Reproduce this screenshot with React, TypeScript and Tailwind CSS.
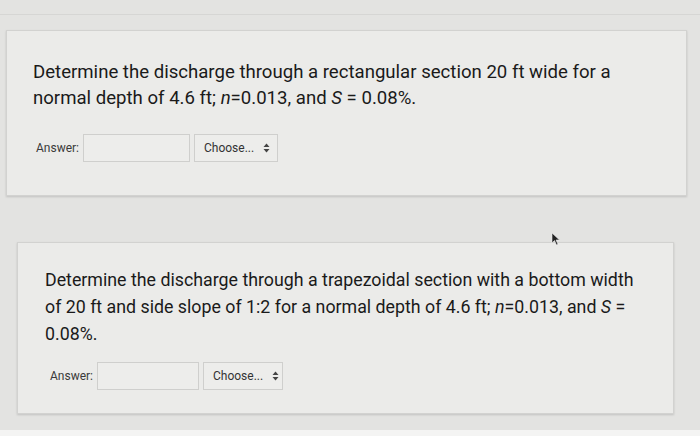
import React from "react";

type RowProps = {
  className: string;
  inputClass: string;
  selectClass: string;
};

type QuestionProps = RowProps & {
  children: React.ReactNode;
  cardClass: string;
  textClass: string;
  rowClass: string;
};

const Arrows = () => (
  <svg width="7" height="10" viewBox="0 0 7 10" className="ml-[9px]">
    <path d="M3.5 0.5 L6.5 4 L0.5 4 Z" fill="#444" />
    <path d="M3.5 9.5 L6.5 6 L0.5 6 Z" fill="#444" />
  </svg>
);

const AnswerRow = ({ className, inputClass, selectClass }: RowProps) => (
  <div className={`flex items-center ${className}`}>
    <span className="text-[12px] text-[#3a3a3a] mr-[4px]">Answer:</span>
    <div className={`h-[28px] border border-[#cfcfcd] bg-[#ededeb] ${inputClass}`} />
    <div className={`ml-[4px] h-[28px] border border-[#cfcfcd] bg-[#ededeb] flex items-center pl-[9px] ${selectClass}`}>
      <span className="text-[12px] text-[#333]">Choose...</span>
      <Arrows />
    </div>
  </div>
);

const Question = ({ children, cardClass, textClass, rowClass, inputClass, selectClass }: QuestionProps) => (
  <div className={`border border-[#d2d2d0] bg-[#ebebe9] shadow-[0_1px_2px_rgba(0,0,0,0.15)] ${cardClass}`}>
    <p className={`text-[#1a1a1a] whitespace-nowrap ${textClass}`}>{children}</p>
    <AnswerRow className={rowClass} inputClass={inputClass} selectClass={selectClass} />
  </div>
);

export default function App() {
  return (
    <div
      className="relative w-[700px] h-[436px] overflow-hidden bg-[#e3e3e1] flex flex-col"
      style={{ fontFamily: "Roboto, 'Liberation Sans', sans-serif" }}
    >
      <div className="mt-[14px] h-px bg-[#d6d6d4]" />
      <Question
        cardClass="mt-[15px] ml-[6px] w-[681px] h-[166px] pt-[28px] pl-[26px]"
        textClass="text-[18.6px] leading-[26px]"
        rowClass="mt-[23px] pl-[3px]"
        inputClass="w-[107px]"
        selectClass="w-[84px]"
      >
        Determine the discharge through a rectangular section 20 ft wide for a
        <br />
        normal depth of 4.6 ft; <i>n</i>=0.013, and <i>S</i> = 0.08%.
      </Question>
      <Question
        cardClass="mt-[46px] ml-[17px] w-[657px] h-[172px] pt-[23px] pl-[27px]"
        textClass="text-[17.8px] leading-[27px]"
        rowClass="mt-[15px] pl-[5px]"
        inputClass="w-[102px]"
        selectClass="w-[80px]"
      >
        Determine the discharge through a trapezoidal section with a bottom width
        <br />
        of 20 ft and side slope of 1:2 for a normal depth of 4.6 ft; <i>n</i>=0.013, and <i>S</i> =
        <br />
        0.08%.
      </Question>
      <div className="mt-auto h-[6px] bg-[#f4f4f3]" />
      <svg className="absolute left-[551px] top-[232px]" width="10" height="14" viewBox="0 0 10 14">
        <path d="M1 1 L1 11 L3.5 8.5 L5.5 13 L7 12.3 L5 8 L8.5 8 Z" fill="#222" stroke="#eee" strokeWidth="0.6" />
      </svg>
    </div>
  );
}
